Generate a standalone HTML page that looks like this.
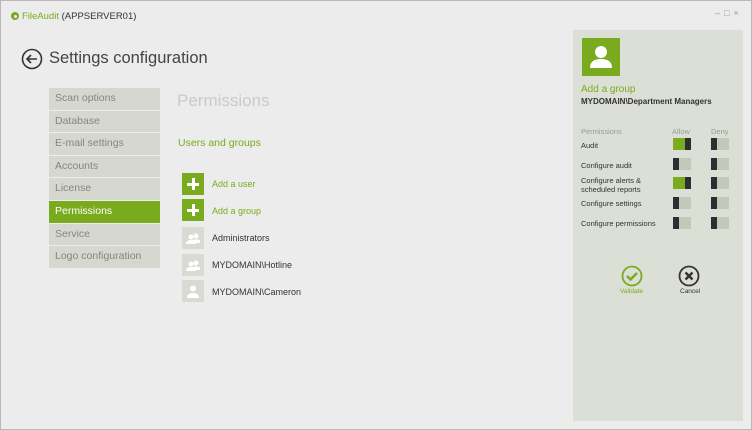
<!DOCTYPE html>
<html><head><style>
*{margin:0;padding:0;box-sizing:border-box}
body{width:752px;height:430px;background:#ececec;font-family:"Liberation Sans",sans-serif;position:relative;overflow:hidden;border:1px solid #b8b8b8}
.a{position:absolute}
.menu div{position:absolute;left:48px;width:111px;height:21.6px;background:#d6d8cf;color:#85857d;font-size:10.5px;line-height:21px;padding-left:6px}
.menu div.on{background:#7aab1e;color:#fff}
.it{position:absolute;left:181px;width:22px;height:22px;background:#d8dad3}
.it.g{background:#7aab1e}
.lbl{position:absolute;left:211px;font-size:9px;color:#333}
.sw{position:absolute;width:18px;height:12px;background:#c4c8bb}
.sw i{position:absolute;top:0;width:6px;height:12px;background:#2b2f33}
.sw.on{background:#7aab1e}
.sw.on i{right:0}
.sw.off i{left:0}
.pl{position:absolute;left:580px;font-size:7.5px;color:#333;line-height:9px}
</style></head><body>
<div class="a" style="left:10px;top:11px;width:8px;height:8px;border-radius:50%;background:#7aab1e"></div>
<div class="a" style="left:13px;top:14px;width:3px;height:3px;border-radius:50%;background:#ececec"></div>
<div class="a" style="left:21px;top:10px;font-size:9.5px;color:#333"><span style="color:#7aab1e">FileAudit</span> (APPSERVER01)</div>
<div class="a" style="left:714px;top:7px;font-size:9px;color:#999;letter-spacing:4px">–□×</div>
<svg class="a" style="left:20px;top:47px" width="22" height="22"><circle cx="11" cy="11" r="9.5" fill="none" stroke="#333" stroke-width="1.6"/><path d="M16 11H6M10 7L6 11L10 15" fill="none" stroke="#333" stroke-width="1.6"/></svg>
<div class="a" style="left:48px;top:48px;font-size:16.5px;color:#444">Settings configuration</div>
<div class="menu">
<div style="top:87px">Scan options</div><div style="top:109.6px">Database</div><div style="top:132.2px">E-mail settings</div><div style="top:154.8px">Accounts</div><div style="top:177.4px">License</div><div class="on" style="top:200px">Permissions</div><div style="top:222.6px">Service</div><div style="top:245.2px">Logo configuration</div>
</div>
<div class="a" style="left:176px;top:90px;font-size:17px;color:#c9cbc5">Permissions</div>
<div class="a" style="left:177px;top:136px;font-size:10.5px;color:#7aab1e">Users and groups</div>
<div class="it g" style="top:172px"><div class="a" style="left:5px;top:10px;width:12px;height:3px;background:#fff"></div><div class="a" style="left:10px;top:5px;width:3px;height:12px;background:#fff"></div></div>
<div class="lbl" style="top:178px;color:#7aab1e">Add a user</div>
<div class="it g" style="top:198px"><div class="a" style="left:5px;top:10px;width:12px;height:3px;background:#fff"></div><div class="a" style="left:10px;top:5px;width:3px;height:12px;background:#fff"></div></div>
<div class="lbl" style="top:205px;color:#7aab1e">Add a group</div>
<div class="it" style="top:226px"><svg width="22" height="22"><circle cx="9" cy="10" r="2.5" fill="#fff"/><circle cx="14" cy="9" r="2.5" fill="#fff"/><path d="M4 17q0-4 5-4t5 4zM11 13q3-1.5 7 0v3h-4z" fill="#fff"/></svg></div>
<div class="lbl" style="top:232px">Administrators</div>
<div class="it" style="top:253px"><svg width="22" height="22"><circle cx="9" cy="10" r="2.5" fill="#fff"/><circle cx="14" cy="9" r="2.5" fill="#fff"/><path d="M4 17q0-4 5-4t5 4zM11 13q3-1.5 7 0v3h-4z" fill="#fff"/></svg></div>
<div class="lbl" style="top:259px">MYDOMAIN\Hotline</div>
<div class="it" style="top:279px"><svg width="22" height="22"><circle cx="11" cy="8.5" r="3" fill="#fff"/><path d="M5 18q0-5 6-5t6 5z" fill="#fff"/></svg></div>
<div class="lbl" style="top:286px">MYDOMAIN\Cameron</div>

<div class="a" style="left:572px;top:29px;width:170px;height:391px;background:#dcdfd6"></div>
<div class="a" style="left:581px;top:37px;width:38px;height:38px;background:#7aab1e"><svg width="38" height="38"><circle cx="19" cy="14" r="6" fill="#fff"/><path d="M8 30q0-9 11-9t11 9z" fill="#fff"/></svg></div>
<div class="a" style="left:580px;top:83px;font-size:10px;color:#7aab1e">Add a group</div>
<div class="a" style="left:580px;top:96px;font-size:8px;color:#333;font-weight:bold">MYDOMAIN\Department Managers</div>
<div class="pl" style="top:126px;color:#999">Permissions</div>
<div class="pl" style="left:671px;top:126px;color:#999">Allow</div>
<div class="pl" style="left:710px;top:126px;color:#999">Deny</div>
<div class="pl" style="top:140px">Audit</div>
<div class="pl" style="top:160px">Configure audit</div>
<div class="pl" style="top:175px">Configure alerts &amp;<br>scheduled reports</div>
<div class="pl" style="top:198px">Configure settings</div>
<div class="pl" style="top:218px">Configure permissions</div>
<div class="sw on" style="left:672px;top:137px"><i></i></div><div class="sw off" style="left:710px;top:137px"><i></i></div>
<div class="sw off" style="left:672px;top:157px"><i></i></div><div class="sw off" style="left:710px;top:157px"><i></i></div>
<div class="sw on" style="left:672px;top:176px"><i></i></div><div class="sw off" style="left:710px;top:176px"><i></i></div>
<div class="sw off" style="left:672px;top:196px"><i></i></div><div class="sw off" style="left:710px;top:196px"><i></i></div>
<div class="sw off" style="left:672px;top:216px"><i></i></div><div class="sw off" style="left:710px;top:216px"><i></i></div>
<svg class="a" style="left:620px;top:264px" width="22" height="22"><circle cx="11" cy="11" r="9.5" fill="none" stroke="#7aab1e" stroke-width="1.8"/><path d="M6 11l3.5 3.5L16 8" fill="none" stroke="#7aab1e" stroke-width="2.4"/></svg>
<div class="a" style="left:619px;top:287px;font-size:6.5px;color:#7aab1e">Validate</div>
<svg class="a" style="left:677px;top:264px" width="22" height="22"><circle cx="11" cy="11" r="9.5" fill="none" stroke="#333" stroke-width="1.8"/><path d="M7.5 7.5l7 7M14.5 7.5l-7 7" stroke="#333" stroke-width="2.4"/></svg>
<div class="a" style="left:679px;top:287px;font-size:6.5px;color:#333">Cancel</div>
</body></html>
